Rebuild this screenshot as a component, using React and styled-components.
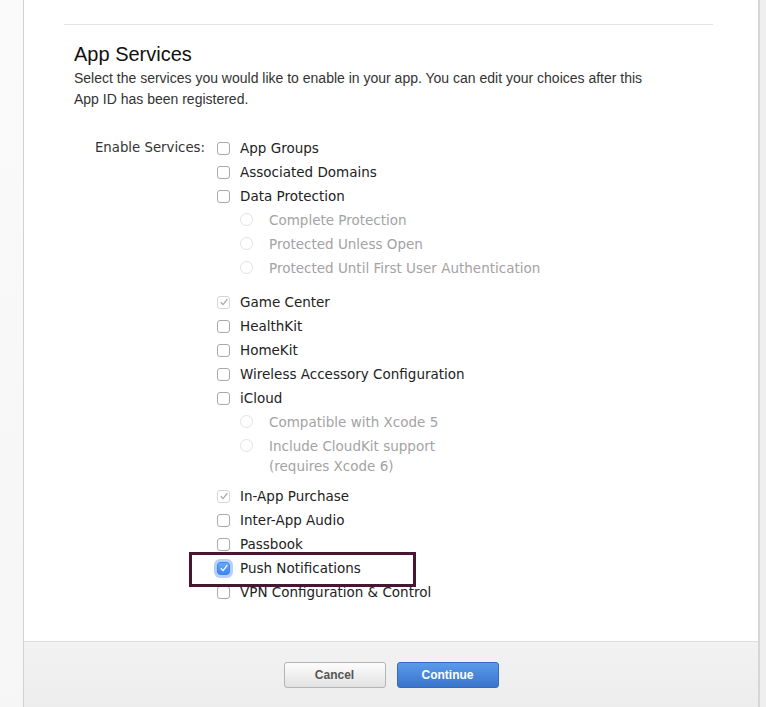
import styled, { createGlobalStyle } from "styled-components";

const GlobalStyle = createGlobalStyle`
  html, body {
    margin: 0;
    padding: 0;
    background: #f0f0f0;
  }
  body {
    font-family: "DejaVu Sans", "Liberation Sans", sans-serif;
    color: #333;
  }
`;

const Page = styled.div`
  display: flex;
  height: 707px;
  overflow: hidden;
`;

const LeftStrip = styled.div`
  width: 23px;
  flex-shrink: 0;
  background: linear-gradient(#fafafa, #f6f6f6);
  border-right: 1px solid #d2d2d2;
`;

const RightStrip = styled.div`
  width: 6px;
  flex-shrink: 0;
  background: #efefef;
`;

const Panel = styled.div`
  flex: 1;
  display: flex;
  flex-direction: column;
  background: #fff;
  border-right: 2px solid #d6d6d6;
`;

const Body = styled.div`
  flex: 1;
  padding-top: 24px;
  position: relative;
`;

const Divider = styled.hr`
  margin: 0 45px 0 40px;
  border: none;
  border-top: 1px solid #e4e4e4;
`;

const Section = styled.section`
  padding: 17px 40px 0 50px;
`;

const Heading = styled.h2`
  margin: 0;
  font-family: "Liberation Sans", sans-serif;
  font-weight: 400;
  font-size: 20px;
  line-height: 24px;
  color: #111;
`;

const Lead = styled.p`
  margin: 2px 0 0;
  font-family: "Liberation Sans", sans-serif;
  font-size: 14px;
  line-height: 21px;
  color: #333;
  max-width: 580px;
`;

const Services = styled.div`
  display: grid;
  grid-template-columns: 131px 1fr;
  column-gap: 12px;
  margin-top: 26px;
`;

const FieldLabel = styled.div`
  text-align: right;
  font-size: 13.3px;
  line-height: 24px;
  color: #333;
`;

const List = styled.div`
  display: flex;
  flex-direction: column;
`;

const Group = styled.div`
  padding-bottom: ${(p) => p.$gap || 0}px;
`;

const Row = styled.label`
  display: flex;
  align-items: center;
  gap: 10px;
  height: 24px;
  font-size: 13.5px;
  line-height: 24px;
  color: #222;
`;

const SubRow = styled.label`
  display: flex;
  align-items: flex-start;
  gap: 16px;
  font-size: 13.5px;
  line-height: 20px;
  padding: 2px 0 2px 23px;
  color: #a3a3a3;
`;

const Box = styled.span`
  width: 13px;
  height: 13px;
  flex-shrink: 0;
  box-sizing: border-box;
  border-radius: 3px;
  display: flex;
  align-items: center;
  justify-content: center;
  border: 1px solid ${(p) => (p.$disabled ? "#d6d6d6" : p.$checked ? "#3f82f0" : "#a9a9a9")};
  background: ${(p) =>
    p.$checked && !p.$disabled ? "linear-gradient(#6aa8ff, #3b86f7)" : "#fff"};
  box-shadow: ${(p) => (p.$focus ? "0 0 0 3px rgba(90, 150, 250, 0.45)" : "none")};
`;

const Radio = styled.span`
  width: 13px;
  height: 13px;
  margin-top: 3px;
  flex-shrink: 0;
  box-sizing: border-box;
  border-radius: 50%;
  border: 1px solid #e2e2e2;
  background: #fff;
`;

const Highlight = styled.div`
  position: absolute;
  left: 165px;
  top: 552px;
  width: 221px;
  height: 29px;
  border: 3px solid #4a1530;
  pointer-events: none;
`;

const Footer = styled.div`
  height: 66px;
  border-top: 1px solid #dedede;
  background: linear-gradient(#f2f2f2, #ededed);
  display: flex;
  justify-content: center;
  gap: 11px;
  padding-top: 20px;
  box-sizing: border-box;
`;

const Button = styled.button`
  width: 102px;
  height: 26px;
  border-radius: 3px;
  font-family: "Liberation Sans", sans-serif;
  font-weight: 700;
  font-size: 12px;
  cursor: pointer;
  border: 1px solid ${(p) => (p.$primary ? "#346bc0" : "#b4b4b4")};
  color: ${(p) => (p.$primary ? "#fff" : "#555")};
  background: ${(p) =>
    p.$primary
      ? "linear-gradient(#5b9aea, #3a74cb)"
      : "linear-gradient(#fdfdfd, #e2e2e2)"};
`;

const Check = ({ color }) => (
  <svg width="10" height="10" viewBox="0 0 10 10">
    <path d="M1.8 5.2 L4.1 7.6 L8.3 2.2" fill="none" stroke={color} strokeWidth="1.3" />
  </svg>
);

const Service = ({ label, checked, disabled, focus }) => (
  <Row>
    <Box $checked={checked} $disabled={disabled} $focus={focus}>
      {checked && <Check color={disabled ? "#a8a8a8" : "#fff"} />}
    </Box>
    {label}
  </Row>
);

const Option = ({ children }) => (
  <SubRow>
    <Radio />
    <span>{children}</span>
  </SubRow>
);

export default function App() {
  return (
    <>
      <GlobalStyle />
      <Page>
        <LeftStrip />
        <Panel>
          <Body>
            <Divider />
            <Section>
              <Heading>App Services</Heading>
              <Lead>
                Select the services you would like to enable in your app. You can edit your
                choices after this App ID has been registered.
              </Lead>
              <Services>
                <FieldLabel>Enable Services:</FieldLabel>
                <List>
                  <Service label="App Groups" />
                  <Service label="Associated Domains" />
                  <Group $gap={10}>
                    <Service label="Data Protection" />
                    <Option>Complete Protection</Option>
                    <Option>Protected Unless Open</Option>
                    <Option>Protected Until First User Authentication</Option>
                  </Group>
                  <Service label="Game Center" checked disabled />
                  <Service label="HealthKit" />
                  <Service label="HomeKit" />
                  <Service label="Wireless Accessory Configuration" />
                  <Group $gap={6}>
                    <Service label="iCloud" />
                    <Option>Compatible with Xcode 5</Option>
                    <Option>
                      Include CloudKit support
                      <br />
                      (requires Xcode 6)
                    </Option>
                  </Group>
                  <Service label="In-App Purchase" checked disabled />
                  <Service label="Inter-App Audio" />
                  <Service label="Passbook" />
                  <Service label="Push Notifications" checked focus />
                  <Service label="VPN Configuration & Control" />
                </List>
              </Services>
            </Section>
            <Highlight />
          </Body>
          <Footer>
            <Button>Cancel</Button>
            <Button $primary>Continue</Button>
          </Footer>
        </Panel>
        <RightStrip />
      </Page>
    </>
  );
}
